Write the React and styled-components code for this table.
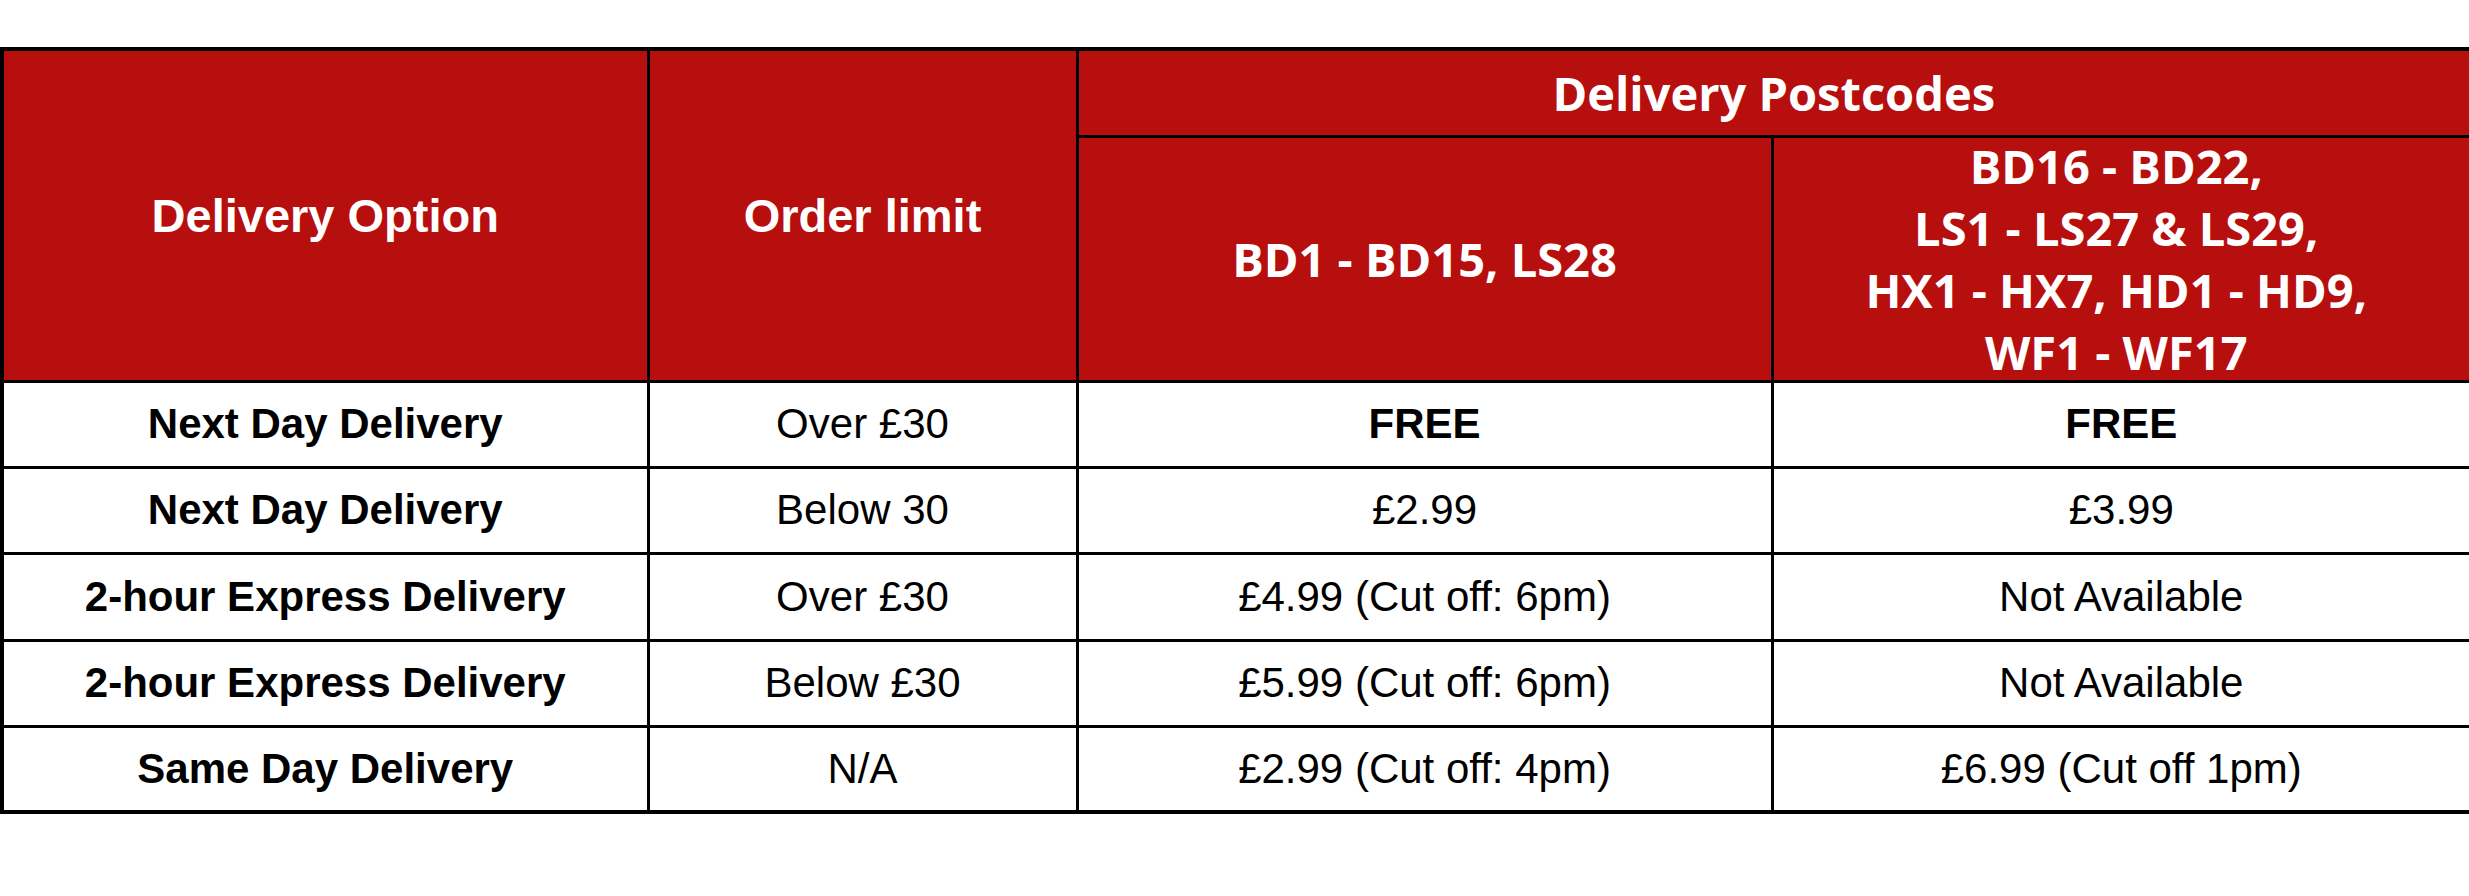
import React from 'react';
import styled, { createGlobalStyle } from 'styled-components';

const GlobalStyle = createGlobalStyle`
  html, body {
    margin: 0;
    padding: 0;
    background: #fff;
  }
  body {
    font-family: "Liberation Sans", Arial, sans-serif;
  }
`

const Page = styled.div`
  width: 2469px;
  padding-top: 47px;
`

const Table = styled.table`
  width: 2469px;
  table-layout: fixed;
  border-collapse: collapse;
  border: 4px solid #000;
`

const Row = styled.tr`
  height: ${p => p.$h}px;
`

const HeadCell = styled.th`
  background: #b70e0e;
  color: #fff;
  border: 3px solid #000;
  padding: 0;
  text-align: center;
  vertical-align: middle;
  font-family: ${p => p.$open ? '"Open Sans", "Liberation Sans", sans-serif' : '"Liberation Sans", Arial, sans-serif'};
  font-weight: 700;
  font-size: 47px;
`

const Stack = styled.div`
  height: 240px;
  display: flex;
  align-items: center;
  justify-content: center;
  padding-right: 10px;
  line-height: 62px;
  white-space: nowrap;
`

const Cell = styled.td`
  border: 3px solid #000;
  padding: 0;
  text-align: center;
  vertical-align: middle;
  color: #000;
  font-family: "Liberation Sans", Arial, sans-serif;
  font-size: 42px;
  font-weight: ${p => p.$bold ? 700 : 400};
`

const rows = [
  ['Next Day Delivery', 'Over £30', 'FREE', 'FREE', true],
  ['Next Day Delivery', 'Below 30', '£2.99', '£3.99'],
  ['2-hour Express Delivery', 'Over £30', '£4.99 (Cut off: 6pm)', 'Not Available'],
  ['2-hour Express Delivery', 'Below £30', '£5.99 (Cut off: 6pm)', 'Not Available'],
  ['Same Day Delivery', 'N/A', '£2.99 (Cut off: 4pm)', '£6.99 (Cut off 1pm)'],
]
const heights = [86, 86, 87, 86, 86]

export default function App() {
  return (
    <Page>
      <GlobalStyle />
      <Table>
        <colgroup>
          <col style={{ width: 646 }} />
          <col style={{ width: 429 }} />
          <col style={{ width: 695 }} />
          <col style={{ width: 699 }} />
        </colgroup>
        <thead>
          <Row $h={87}>
            <HeadCell rowSpan={2}>Delivery Option</HeadCell>
            <HeadCell rowSpan={2}>Order limit</HeadCell>
            <HeadCell colSpan={2} $open>Delivery Postcodes</HeadCell>
          </Row>
          <Row $h={245}>
            <HeadCell $open>BD1 - BD15, LS28</HeadCell>
            <HeadCell $open>
              <Stack>
                <div>
                  BD16 - BD22,<br />
                  LS1 - LS27 &amp; LS29,<br />
                  HX1 - HX7, HD1 - HD9,<br />
                  WF1 - WF17
                </div>
              </Stack>
            </HeadCell>
          </Row>
        </thead>
        <tbody>
          {rows.map((r, i) => (
            <Row key={i} $h={heights[i]}>
              <Cell $bold>{r[0]}</Cell>
              <Cell>{r[1]}</Cell>
              <Cell $bold={r[4]}>{r[2]}</Cell>
              <Cell $bold={r[4]}>{r[3]}</Cell>
            </Row>
          ))}
        </tbody>
      </Table>
    </Page>
  )
}
